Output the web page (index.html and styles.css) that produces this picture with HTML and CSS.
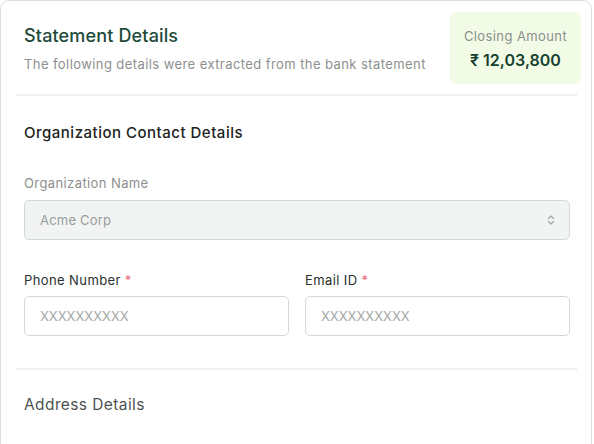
FILE: index.html
```html
<!DOCTYPE html>
<html lang="en">
<head>
<meta charset="utf-8">
<title>Statement Details</title>
<link rel="stylesheet" href="styles.css">
</head>
<body>
<div class="card">
  <header class="head">
    <div class="head-text">
      <h1 class="title">Statement Details</h1>
      <p class="subtitle">The following details were extracted from the bank statement</p>
    </div>
    <div class="amount-box">
      <div class="amount-label">Closing Amount</div>
      <div class="amount-value">₹ 12,03,800</div>
    </div>
  </header>
  <hr class="divider">
  <section class="section">
    <h2 class="section-title">Organization Contact Details</h2>
    <div class="field">
      <label class="label label-muted">Organization Name</label>
      <div class="select">
        <span class="select-value">Acme Corp</span>
        <svg class="chev" width="8" height="12" viewBox="0 0 8 12" fill="none" stroke="#a3a7a5" stroke-width="1.2" stroke-linecap="round" stroke-linejoin="round"><path d="M1.5 4.5 L4 2 L6.5 4.5"/><path d="M1.5 7.5 L4 10 L6.5 7.5"/></svg>
      </div>
    </div>
    <div class="row">
      <div class="field">
        <label class="label">Phone Number <span class="req">*</span></label>
        <div class="input"><span class="placeholder">XXXXXXXXXX</span></div>
      </div>
      <div class="field">
        <label class="label">Email ID <span class="req">*</span></label>
        <div class="input"><span class="placeholder">XXXXXXXXXX</span></div>
      </div>
    </div>
  </section>
  <hr class="divider">
  <section class="section">
    <h2 class="section-title section-title-muted">Address Details</h2>
  </section>
</div>
</body>
</html>
```

FILE: styles.css
```css
* { box-sizing: border-box; }
html, body {
  margin: 0;
  padding: 0;
  background: #ffffff;
  font-family: Inter, "Noto Sans", "Liberation Sans", sans-serif;
}
.card {
  width: 592px;
  height: 444px;
  border: 1px solid #dcdedd;
  border-bottom-width: 0;
  border-radius: 9px 9px 0 0;
  background: #fff;
  overflow: hidden;
}
.head {
  display: flex;
  justify-content: space-between;
  align-items: flex-start;
  padding: 11px 10px 0 23px;
  height: 93px;
}
.head-text { padding-top: 13px; }
.title {
  margin: 0;
  font-size: 18px;
  font-weight: 500;
  letter-spacing: 0.15px;
  color: #1d4a3a;
  line-height: 22px;
}
.subtitle {
  margin: 9px 0 0;
  font-size: 13px;
  letter-spacing: 0.42px;
  color: #8b908d;
  line-height: 16px;
}
.amount-box {
  width: 131px;
  height: 72px;
  background: #f1fbe6;
  border-radius: 6px;
  display: flex;
  flex-direction: column;
  align-items: center;
  padding-top: 16px;
}
.amount-label {
  font-size: 13px;
  letter-spacing: 0.4px;
  color: #8b908d;
  line-height: 16px;
}
.amount-value {
  margin-top: 6px;
  font-size: 16px;
  font-weight: 600;
  color: #17402f;
  line-height: 20px;
}
.divider {
  margin: 0 14px 0 15px;
  border: 0;
  border-top: 2px solid #eeefef;
  height: 0;
}
.section { padding: 0 21px 0 23px; }
.section-title {
  margin: 0;
  padding-top: 28px;
  font-size: 15px;
  font-weight: 500;
  letter-spacing: 0.5px;
  color: #1c2220;
  line-height: 18px;
}
.section-title-muted {
  padding-top: 26px;
  color: #4d5350;
  font-weight: 400;
  font-size: 15.5px;
  letter-spacing: 0.4px;
}
.field {
  display: flex;
  flex-direction: column;
  flex: 1;
}
.section > .field { margin-top: 33px; }
.label {
  font-size: 13px;
  letter-spacing: 0.4px;
  color: #2a302d;
  line-height: 16px;
  margin-bottom: 9px;
}
.row .label { margin-bottom: 8px; }
.label-muted { color: #8b908d; }
.req { color: #e86a80; }
.select {
  height: 40px;
  border: 1px solid #d4d8d6;
  border-radius: 5px;
  background: #f2f4f3;
  display: flex;
  align-items: center;
  justify-content: space-between;
  padding: 0 14px 0 15px;
}
.select-value {
  font-size: 13px;
  letter-spacing: 0.2px;
  color: #989d9a;
}
.chev { display: block; }
.row {
  display: flex;
  gap: 16px;
  margin-top: 32px;
  padding-bottom: 32px;
}
.input {
  height: 40px;
  border: 1px solid #d4d8d6;
  border-radius: 5px;
  background: #fff;
  display: flex;
  align-items: center;
  padding: 0 15px;
}
.placeholder {
  font-size: 13px;
  color: #a3a7a5;
}
```
